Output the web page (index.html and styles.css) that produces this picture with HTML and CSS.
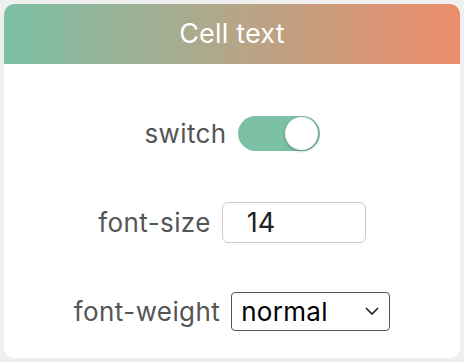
FILE: index.html
```html
<!DOCTYPE html>
<html>
<head>
<meta charset="utf-8">
<title>Cell text</title>
<link rel="stylesheet" href="styles.css">
</head>
<body>
    <!-- 外部的卡片容器 -->
    <div class="card">
        <div class="card-title">Cell text</div>
        <div class="card-body">
            <div class="row">
                <span class="label">switch</span>
                <label class="switch">
                    <input type="checkbox" checked>
                    <span class="slider"></span>
                </label>
            </div>
            <div class="row">
                <span class="label">font-size</span>
                <input class="size-input" type="text" value="14">
            </div>
            <div class="row">
                <span class="label">font-weight</span>
                <div class="select-box">
                    <span class="select-value">normal</span>
                    <svg class="select-arrow" width="16" height="10" viewBox="0 0 16 10">
                        <path d="M2 2 L8 8 L14 2" fill="none" stroke="#222" stroke-width="1.6"/>
                    </svg>
                </div>
            </div>
        </div>
    </div>
</body>
</html>
```

FILE: styles.css
```css
* {
    margin: 0;
    padding: 0;
    box-sizing: border-box;
}
body {
    background-color: #efefef;
    padding: 4px;
    font-family: Inter, "Liberation Sans", sans-serif;
}
/* 卡片 */
.card {
    width: 456px;
    height: 354px;
    background-color: #fff;
    border-radius: 10px;
    overflow: hidden;
}
.card-title {
    height: 60px;
    line-height: 60px;
    text-align: center;
    color: #fff;
    font-size: 27px;
    letter-spacing: 0.2px;
    background: linear-gradient(to right, #7cc0a6, #ec8c6a);
}
.card-body {
    display: flex;
    flex-direction: column;
    gap: 49px;
    padding-top: 49px;
}
.row {
    height: 40px;
    display: flex;
    align-items: center;
    justify-content: center;
    gap: 11px;
}
.label {
    font-size: 26px;
    letter-spacing: 0.4px;
    color: #555;
}
/* 开关 */
.switch {
    position: relative;
    width: 82px;
    height: 35px;
}
.switch input {
    display: none;
}
.slider {
    position: absolute;
    inset: 0;
    border-radius: 18px;
    background-color: #7cc0a6;
}
.slider::after {
    content: "";
    position: absolute;
    right: 2px;
    top: 1px;
    width: 33px;
    height: 33px;
    border-radius: 50%;
    background-color: #fff;
    box-shadow: 0 1px 3px rgba(0, 0, 0, 0.3);
}
/* 输入框 */
.size-input {
    width: 144px;
    height: 41px;
    border: 1px solid #ccc;
    border-radius: 6px;
    padding-left: 24px;
    font-family: inherit;
    font-size: 27px;
    color: #222;
    outline: none;
}
/* 下拉框 */
.select-box {
    width: 159px;
    height: 39px;
    border: 1px solid #555;
    border-radius: 4px;
    display: flex;
    align-items: center;
    justify-content: space-between;
    padding: 0 9px 0 9px;
}
.select-value {
    font-size: 26px;
    letter-spacing: 0.3px;
    color: #000;
}
```
